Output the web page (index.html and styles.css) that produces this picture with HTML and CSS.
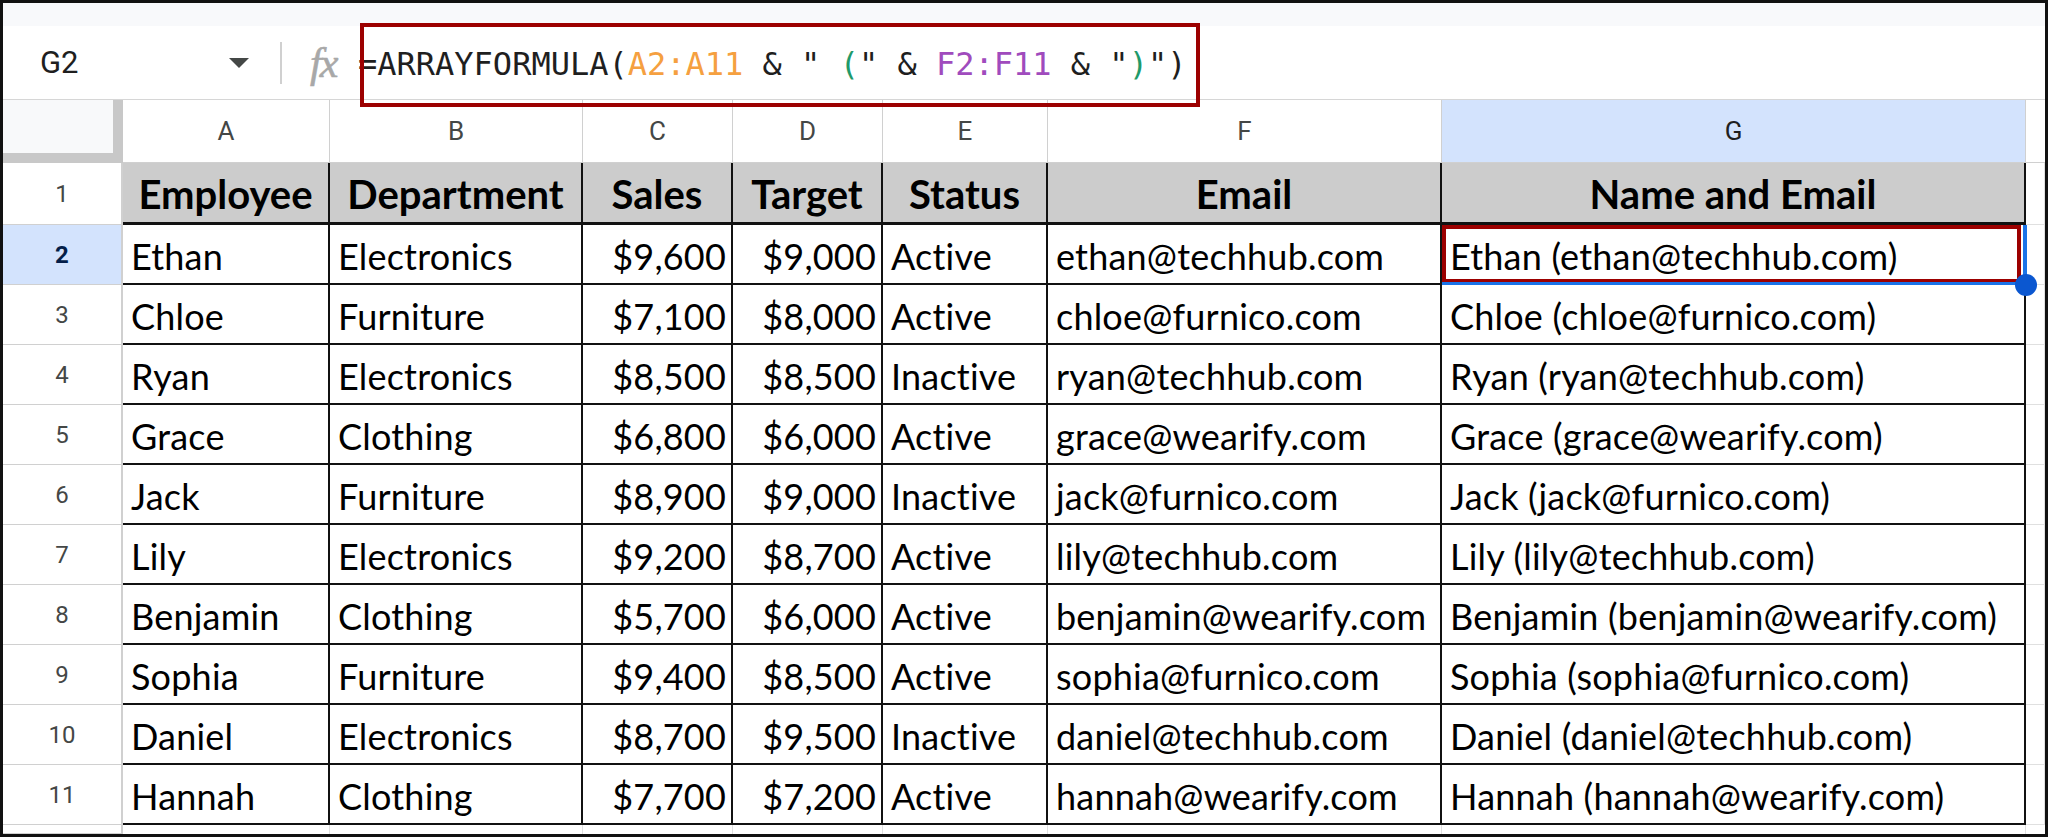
FILE: index.html
```html
<!DOCTYPE html>
<html>
<head>
<meta charset="utf-8">
<link rel="stylesheet" href="styles.css">
</head>
<body>
<div class="frame">
  <div class="topstrip"></div>
  <div class="fbar">
    <div class="namebox"><span class="ref">G2</span><span class="caret"></span></div>
    <div class="sep"></div>
    <div class="fx">fx</div>
    <div class="formula"><span>=ARRAYFORMULA(</span><span class="ra">A2:A11</span><span> &amp; "&nbsp;</span><span class="str">(</span><span>" &amp; </span><span class="rf">F2:F11</span><span> &amp; "</span><span class="str">)</span><span>")</span></div>
  </div>
  <div class="sheet">
    <div class="ch corner"></div>
    <div class="ch">A</div><div class="ch">B</div><div class="ch">C</div><div class="ch">D</div><div class="ch">E</div><div class="ch">F</div><div class="ch chsel">G</div><div class="ch chx"></div>

    <div class="rh">1</div>
    <div class="c h">Employee</div><div class="c h">Department</div><div class="c h">Sales</div><div class="c h">Target</div><div class="c h">Status</div><div class="c h">Email</div><div class="c h">Name and Email</div><div class="x"></div>

    <div class="rh rhsel">2</div>
    <div class="c">Ethan</div><div class="c">Electronics</div><div class="c n">$9,600</div><div class="c n">$9,000</div><div class="c">Active</div><div class="c">ethan@techhub.com</div><div class="c sel">Ethan (ethan@techhub.com)<span class="handle"></span></div><div class="x"></div>

    <div class="rh">3</div>
    <div class="c">Chloe</div><div class="c">Furniture</div><div class="c n">$7,100</div><div class="c n">$8,000</div><div class="c">Active</div><div class="c">chloe@furnico.com</div><div class="c">Chloe (chloe@furnico.com)</div><div class="x"></div>

    <div class="rh">4</div>
    <div class="c">Ryan</div><div class="c">Electronics</div><div class="c n">$8,500</div><div class="c n">$8,500</div><div class="c">Inactive</div><div class="c">ryan@techhub.com</div><div class="c">Ryan (ryan@techhub.com)</div><div class="x"></div>

    <div class="rh">5</div>
    <div class="c">Grace</div><div class="c">Clothing</div><div class="c n">$6,800</div><div class="c n">$6,000</div><div class="c">Active</div><div class="c">grace@wearify.com</div><div class="c">Grace (grace@wearify.com)</div><div class="x"></div>

    <div class="rh">6</div>
    <div class="c">Jack</div><div class="c">Furniture</div><div class="c n">$8,900</div><div class="c n">$9,000</div><div class="c">Inactive</div><div class="c">jack@furnico.com</div><div class="c">Jack (jack@furnico.com)</div><div class="x"></div>

    <div class="rh">7</div>
    <div class="c">Lily</div><div class="c">Electronics</div><div class="c n">$9,200</div><div class="c n">$8,700</div><div class="c">Active</div><div class="c">lily@techhub.com</div><div class="c">Lily (lily@techhub.com)</div><div class="x"></div>

    <div class="rh">8</div>
    <div class="c">Benjamin</div><div class="c">Clothing</div><div class="c n">$5,700</div><div class="c n">$6,000</div><div class="c">Active</div><div class="c">benjamin@wearify.com</div><div class="c">Benjamin (benjamin@wearify.com)</div><div class="x"></div>

    <div class="rh">9</div>
    <div class="c">Sophia</div><div class="c">Furniture</div><div class="c n">$9,400</div><div class="c n">$8,500</div><div class="c">Active</div><div class="c">sophia@furnico.com</div><div class="c">Sophia (sophia@furnico.com)</div><div class="x"></div>

    <div class="rh">10</div>
    <div class="c">Daniel</div><div class="c">Electronics</div><div class="c n">$8,700</div><div class="c n">$9,500</div><div class="c">Inactive</div><div class="c">daniel@techhub.com</div><div class="c">Daniel (daniel@techhub.com)</div><div class="x"></div>

    <div class="rh">11</div>
    <div class="c">Hannah</div><div class="c">Clothing</div><div class="c n">$7,700</div><div class="c n">$7,200</div><div class="c">Active</div><div class="c">hannah@wearify.com</div><div class="c">Hannah (hannah@wearify.com)</div><div class="x"></div>

    <div class="rh last"></div>
    <div class="e"></div><div class="e"></div><div class="e"></div><div class="e"></div><div class="e"></div><div class="e"></div><div class="e"></div><div class="e ex"></div>
  </div>
  <div class="fbox"></div>
</div>
</body>
</html>
```

FILE: styles.css
```css
* { box-sizing: border-box; }
html, body { margin: 0; padding: 0; background: #fff; }
.frame {
  position: relative;
  width: 2048px;
  height: 837px;
  border: 3px solid #111;
  overflow: hidden;
  display: flex;
  flex-direction: column;
  background: #fff;
}
.topstrip { height: 23px; background: #f8f9fb; flex: none; }
.fbar {
  height: 74px;
  flex: none;
  display: flex;
  align-items: center;
  border-bottom: 1px solid #d6d6d6;
  background: #fff;
}
.namebox {
  width: 254px;
  padding-left: 37px;
  display: flex;
  align-items: center;
  justify-content: space-between;
  padding-right: 8px;
}
.ref { font-family: Roboto, "Liberation Sans", sans-serif; font-size: 31px; color: #1f1f1f; }
.caret {
  width: 0; height: 0;
  border-left: 10px solid transparent;
  border-right: 10px solid transparent;
  border-top: 10px solid #444746;
}
.sep { width: 2px; height: 42px; background: #d0d0d0; margin-left: 23px; }
.fx {
  margin-left: 28px;
  font-family: "Liberation Serif", serif;
  font-style: italic;
  font-size: 42px;
  color: #a8a8a8;
  letter-spacing: -2px;
  width: 52px;
  -webkit-text-stroke: 0.6px #a8a8a8;
}
.formula {
  margin-left: -4px;
  font-family: "DejaVu Sans Mono", "Liberation Mono", monospace;
  font-size: 32px;
  color: #1f1f1f;
  white-space: pre;
  padding-top: 2px;
}
.ra { color: #f5a040; }
.rf { color: #a04bbd; }
.str { color: #1f9a6a; }
.fbox {
  position: absolute;
  left: 357px;
  top: 20px;
  width: 840px;
  height: 84px;
  border: 4px solid #9c0000;
}
.sheet {
  flex: 1;
  display: grid;
  grid-template-columns: 120px 207px 253px 150px 150px 165px 394px 584px 1fr;
  grid-template-rows: 63px 62px repeat(10, 60px) 1fr;
}
.ch {
  font-family: Roboto, "Liberation Sans", sans-serif;
  font-size: 26px;
  color: #444746;
  display: flex;
  align-items: center;
  justify-content: center;
  border-right: 1px solid #d0d0d0;
  border-bottom: 1px solid #d0d0d0;
}
.ch.corner {
  background: #f8f9fa;
  border-right: 10px solid #c8c8c8;
  border-bottom: 10px solid #c8c8c8;
}
.ch.chsel { background: #d3e3fd; color: #1f1f1f; }
.ch.chx { border-right: none; }
.rh {
  font-family: Roboto, "Liberation Sans", sans-serif;
  font-size: 24px;
  color: #444746;
  display: flex;
  align-items: center;
  justify-content: center;
  border-right: 2px solid #d0d0d0;
  border-bottom: 1px solid #d0d0d0;
}
.rh.rhsel { background: #d3e3fd; color: #041e49; font-weight: bold; }
.c {
  font-family: Lato, "Open Sans", sans-serif;
  font-size: 36px;
  letter-spacing: 0.2px;
  color: #000;
  display: flex;
  align-items: center;
  padding: 3px 6px 0 8px;
  border-right: 2px solid #111;
  border-bottom: 2px solid #111;
  white-space: nowrap;
  overflow: visible;
}
.c.h {
  background: #cccccc;
  font-weight: bold;
  font-size: 40px;
  letter-spacing: 0;
  justify-content: center;
  border-bottom: 3px solid #111;
  padding: 3px 0 0;
}
.c.n { justify-content: flex-end; padding-right: 5px; }
.c.sel { position: relative; }
.c.sel::before {
  content: "";
  position: absolute;
  left: 0; top: 0; right: 3px; bottom: 0;
  border: 4px solid #9c0000;
}
.c.sel::after {
  content: "";
  position: absolute;
  left: 0; right: -3px; top: 0; bottom: -2px;
  border-right: 4px solid #1a73e8;
  border-bottom: 3px solid #1a73e8;
}
.handle {
  position: absolute;
  right: -13px;
  bottom: -13px;
  width: 22px;
  height: 22px;
  border-radius: 50%;
  background: #0b57d0;
  z-index: 2;
}
.x { border-bottom: 1px solid #e0e0e0; border-right: 1px solid #e0e0e0; }
.e { border-right: 1px solid #e0e0e0; }
.e.ex { border-right: none; }
```
